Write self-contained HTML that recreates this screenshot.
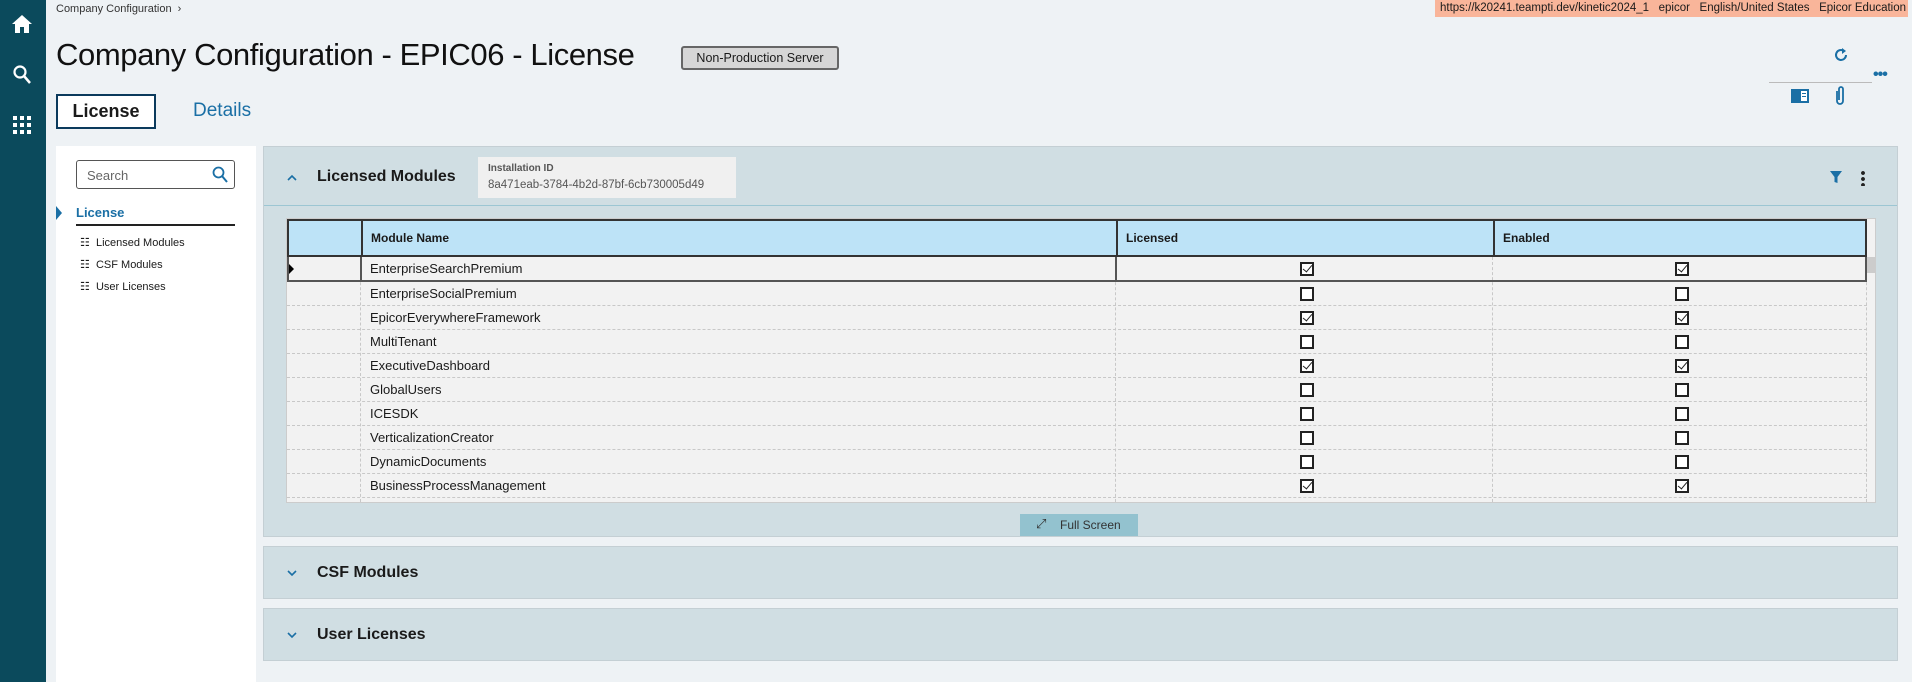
<!DOCTYPE html>
<html><head><meta charset="utf-8"><style>
*{box-sizing:border-box;margin:0;padding:0}
body{width:1912px;height:682px;overflow:hidden;background:#eef2f5;font-family:"Liberation Sans",sans-serif;color:#1a1a1a;position:relative}
.a{position:absolute}
.side{left:0;top:0;width:46px;height:682px;background:#0b4a5c}
.panel{background:#d0dee3;border:1px solid #c4cfd4}
.cb{position:absolute;width:14px;height:14px;border:2px solid #222;background:#fff}
.cb.c::after{content:"";position:absolute;left:3px;top:-1px;width:4px;height:8px;border:solid #222;border-width:0 1.5px 1.5px 0;transform:rotate(40deg)}
.row{position:absolute;left:0;width:1580px;height:24px;border-bottom:1px dashed #c8c8c8;font-size:13px;line-height:24px}
.row span{position:absolute;left:83px}
.chev{position:absolute;left:22px;width:12px;height:12px}
</style></head><body>
<div class="a side">
 <svg class="a" style="left:11px;top:14px" width="22" height="20" viewBox="0 0 22 20"><path d="M11 1 L1 10 H4 V19 H9 V13 H13 V19 H18 V10 H21 Z" fill="#fff"/></svg>
 <svg class="a" style="left:12px;top:64px" width="20" height="22" viewBox="0 0 20 22"><circle cx="8" cy="8" r="5.5" stroke="#fff" stroke-width="2.2" fill="none"/><path d="M12 12 L18 19" stroke="#fff" stroke-width="2.5"/></svg>
 <svg class="a" style="left:13px;top:116px" width="18" height="18" viewBox="0 0 18 18" fill="#fff"><rect x="0" y="0" width="4" height="4"/><rect x="7" y="0" width="4" height="4"/><rect x="14" y="0" width="4" height="4"/><rect x="0" y="7" width="4" height="4"/><rect x="7" y="7" width="4" height="4"/><rect x="14" y="7" width="4" height="4"/><rect x="0" y="14" width="4" height="4"/><rect x="7" y="14" width="4" height="4"/><rect x="14" y="14" width="4" height="4"/></svg>
</div>
<div class="a" style="left:56px;top:3px;font-size:11px;color:#333">Company Configuration &nbsp;›</div>
<div class="a" style="left:1435px;top:0;width:473px;height:17px;background:#f9b59a;font-size:11.5px;line-height:16px;padding-left:5px;white-space:nowrap;overflow:hidden">https://k20241.teampti.dev/kinetic2024_1 &nbsp;&nbsp;epicor &nbsp;&nbsp;English/United States &nbsp;&nbsp;Epicor Education</div>
<div class="a" style="left:56px;top:37px;font-size:31px;letter-spacing:-0.4px;color:#111;white-space:nowrap">Company Configuration - EPIC06 - License</div>
<div class="a" style="left:681px;top:46px;width:158px;height:24px;background:#d6d6d6;border:2px solid #666;border-radius:3px;font-size:12.5px;line-height:20px;text-align:center">Non-Production Server</div>
<svg class="a" style="left:1832px;top:46px" width="18" height="18" viewBox="0 0 18 18"><path d="M14 9 A5 5 0 1 1 12 5" stroke="#1a6fa5" stroke-width="2" fill="none"/><path d="M10 2 L14 5 L10 8 Z" fill="#1a6fa5"/></svg>
<div class="a" style="left:1769px;top:82px;width:103px;height:1px;background:#bbb"></div>
<div class="a" style="left:1873px;top:66px;font-size:16px;color:#1a6fa5;font-weight:bold;letter-spacing:-1px">•••</div>
<svg class="a" style="left:1790px;top:87px" width="20" height="18" viewBox="0 0 20 18"><rect x="1" y="2" width="18" height="14" fill="#1a6fa5"/><rect x="11" y="4" width="6" height="10" fill="#fff"/><rect x="12" y="6" width="4" height="1" fill="#1a6fa5"/><rect x="12" y="9" width="4" height="1" fill="#1a6fa5"/></svg>
<svg class="a" style="left:1834px;top:85px" width="12" height="22" viewBox="0 0 12 22"><path d="M3 6 V16 A3 3 0 0 0 9 16 V4 A2 2 0 0 0 5 4 V15" stroke="#1a6fa5" stroke-width="1.8" fill="none"/></svg>
<div class="a" style="left:56px;top:94px;width:100px;height:35px;border:2px solid #0b3a5c;background:#fff;font-size:18px;font-weight:bold;text-align:center;line-height:31px">License</div>
<div class="a" style="left:193px;top:100px;font-size:19px;color:#1a6fa5">Details</div>
<div class="a" style="left:56px;top:146px;width:200px;height:536px;background:#fff">
 <div class="a" style="left:20px;top:14px;width:159px;height:29px;border:1px solid #555;border-radius:3px;font-size:13px;color:#666;padding:7px 10px">Search</div>
 <svg class="a" style="left:156px;top:20px" width="16" height="17" viewBox="0 0 16 17"><circle cx="6.5" cy="6.5" r="5" stroke="#1a6fa5" stroke-width="1.8" fill="none"/><path d="M10 10 L15 16" stroke="#1a6fa5" stroke-width="2"/></svg>
 <div class="a" style="left:0;top:60px;width:0;height:0;border-left:6px solid #1a6fa5;border-top:7px solid transparent;border-bottom:7px solid transparent"></div>
 <div class="a" style="left:20px;top:59px;font-size:13px;color:#1a6fa5;font-weight:bold">License</div>
 <div class="a" style="left:20px;top:78px;width:159px;height:2px;background:#222"></div>
 <div class="a" style="left:24px;top:86px;font-size:11px;line-height:22px">
  <div>☷&nbsp; Licensed Modules</div><div>☷&nbsp; CSF Modules</div><div>☷&nbsp; User Licenses</div></div>
</div>
<div class="a panel" style="left:263px;top:146px;width:1635px;height:391px">
 <div class="a" style="left:0;top:58px;width:1633px;height:1px;background:#9cc6d3"></div>
 <svg class="chev" style="top:25px" viewBox="0 0 12 12"><path d="M2 8 L6 4 L10 8" stroke="#1a6fa5" stroke-width="1.6" fill="none"/></svg>
 <div class="a" style="left:53px;top:21px;font-size:16px;font-weight:bold">Licensed Modules</div>
 <div class="a" style="left:214px;top:10px;width:258px;height:41px;background:#f0f0f0;padding:3px 10px;font-size:10px;color:#555;line-height:17px;white-space:nowrap"><b>Installation ID</b><br><span style="font-size:11.5px">8a471eab-3784-4b2d-87bf-6cb730005d49</span></div>
 <svg class="a" style="left:1565px;top:23px" width="14" height="14" viewBox="0 0 14 14"><path d="M1 1 H13 L8.5 7 V13 L5.5 12 V7 Z" fill="#1a6fa5"/></svg>
 <div class="a" style="left:1597px;top:23px;width:4px;height:16px;background:radial-gradient(circle,#222 1.8px,transparent 2px) 0 0/4px 6px"></div>
 <div class="a" style="left:22px;top:71px;width:1590px;height:285px;background:#f2f2f2;overflow:hidden;border:1px solid #ccc">
  <div class="a" style="left:0;top:0;width:1580px;height:38px;background:#bde3f7;border:2px solid #333;font-size:12px;font-weight:bold;line-height:34px">
   <div class="a" style="left:72px;top:0;width:2px;height:36px;background:#333"></div>
   <div class="a" style="left:827px;top:0;width:2px;height:36px;background:#333"></div>
   <div class="a" style="left:1204px;top:0;width:2px;height:36px;background:#333"></div>
   <span class="a" style="left:82px">Module Name</span><span class="a" style="left:837px">Licensed</span><span class="a" style="left:1214px">Enabled</span>
  </div>
  <div class="a" style="left:1580px;top:38px;width:10px;height:16px;background:#ccc"></div>
  <div class="a" style="left:73px;top:38px;width:0;height:250px;border-left:1px dashed #c8c8c8"></div>
  <div class="a" style="left:828px;top:38px;width:0;height:250px;border-left:1px dashed #c8c8c8"></div>
  <div class="a" style="left:1205px;top:38px;width:0;height:250px;border-left:1px dashed #c8c8c8"></div>
  <div class="a" style="left:1579px;top:38px;width:0;height:250px;border-left:1px dashed #c8c8c8"></div>
  <div class="row" style="top:38px;height:25px;border:2px solid #555;border-top:none"><div class="a" style="left:0;top:7px;border-left:5px solid #000;border-top:5px solid transparent;border-bottom:5px solid transparent"></div><div class="a" style="left:71px;top:0;width:2px;height:23px;background:#555"></div><div class="a" style="left:826px;top:0;width:2px;height:23px;background:#555"></div><span style="left:81px">EnterpriseSearchPremium</span><i class="cb c" style="left:1011px;top:5px"></i><i class="cb c" style="left:1386px;top:5px"></i></div>
  <div class="row" style="top:63px"><span>EnterpriseSocialPremium</span><i class="cb" style="left:1013px;top:5px"></i><i class="cb" style="left:1388px;top:5px"></i></div>
  <div class="row" style="top:87px"><span>EpicorEverywhereFramework</span><i class="cb c" style="left:1013px;top:5px"></i><i class="cb c" style="left:1388px;top:5px"></i></div>
  <div class="row" style="top:111px"><span>MultiTenant</span><i class="cb" style="left:1013px;top:5px"></i><i class="cb" style="left:1388px;top:5px"></i></div>
  <div class="row" style="top:135px"><span>ExecutiveDashboard</span><i class="cb c" style="left:1013px;top:5px"></i><i class="cb c" style="left:1388px;top:5px"></i></div>
  <div class="row" style="top:159px"><span>GlobalUsers</span><i class="cb" style="left:1013px;top:5px"></i><i class="cb" style="left:1388px;top:5px"></i></div>
  <div class="row" style="top:183px"><span>ICESDK</span><i class="cb" style="left:1013px;top:5px"></i><i class="cb" style="left:1388px;top:5px"></i></div>
  <div class="row" style="top:207px"><span>VerticalizationCreator</span><i class="cb" style="left:1013px;top:5px"></i><i class="cb" style="left:1388px;top:5px"></i></div>
  <div class="row" style="top:231px"><span>DynamicDocuments</span><i class="cb" style="left:1013px;top:5px"></i><i class="cb" style="left:1388px;top:5px"></i></div>
  <div class="row" style="top:255px"><span>BusinessProcessManagement</span><i class="cb c" style="left:1013px;top:5px"></i><i class="cb c" style="left:1388px;top:5px"></i></div>
  <div class="row" style="top:279px"><i class="cb" style="left:1013px;top:5px"></i><i class="cb" style="left:1388px;top:5px"></i></div>
 </div>
 <div class="a" style="left:756px;top:367px;width:118px;height:22px;background:#93c2cf;font-size:12px;color:#333;line-height:22px;padding-left:40px">Full Screen</div>
 <div class="a" style="left:772px;top:369px;font-size:13px;color:#333">⤢</div>
</div>
<div class="a panel" style="left:263px;top:546px;width:1635px;height:53px">
 <svg class="chev" style="top:20px" viewBox="0 0 12 12"><path d="M2 4 L6 8 L10 4" stroke="#1a6fa5" stroke-width="1.6" fill="none"/></svg>
 <div class="a" style="left:53px;top:17px;font-size:16px;font-weight:bold">CSF Modules</div></div>
<div class="a panel" style="left:263px;top:608px;width:1635px;height:53px">
 <svg class="chev" style="top:20px" viewBox="0 0 12 12"><path d="M2 4 L6 8 L10 4" stroke="#1a6fa5" stroke-width="1.6" fill="none"/></svg>
 <div class="a" style="left:53px;top:17px;font-size:16px;font-weight:bold">User Licenses</div></div>
</body></html>
